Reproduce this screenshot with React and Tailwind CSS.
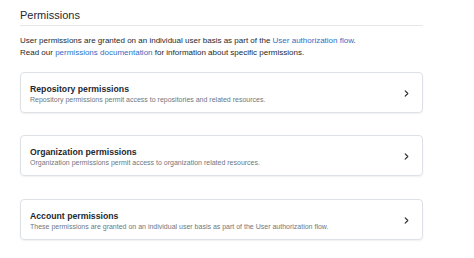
const sections = [
  {
    title: "Repository permissions",
    text: "Repository permissions permit access to repositories and related resources.",
  },
  {
    title: "Organization permissions",
    text: "Organization permissions permit access to organization related resources.",
  },
  {
    title: "Account permissions",
    text: "These permissions are granted on an individual user basis as part of the User authorization flow.",
  },
];

function Chevron() {
  return (
    <svg viewBox="0 0 8 8" className="w-[7px] h-[7px] text-[#24292f]" fill="none" stroke="currentColor" strokeWidth="1.3" strokeLinecap="round" strokeLinejoin="round" aria-hidden="true">
      <polyline points="2.5,1 5.5,4 2.5,7" />
    </svg>
  );
}

export default function App() {
  return (
    <div className="w-[474px] h-[258px] bg-white font-['Liberation_Sans',Arial,sans-serif] text-[#24292f]">
      <div className="w-[403px] ml-[20px] pt-[7px]">
        {/* Header */}
        <div className="border-b border-[#e4e7ea] pb-[2px]">
          <h2 className="text-[11px] leading-[16px] font-normal">Permissions</h2>
        </div>

        <p className="mt-[9px] text-[8px] leading-[12px]">
          User permissions are granted on an individual user basis as part of the{" "}
          <a href="#" className="text-[#2f6fc7]">User authorization flow</a>.
          <br />
          Read our <a href="#" className="text-[#2f6fc7]">permissions documentation</a> for information about specific permissions.
        </p>

        {/* Permission sections */}
        <div className="mt-[12.5px] flex flex-col gap-[22.5px]">
          {sections.map((s) => (
            <button
              key={s.title}
              type="button"
              className="flex items-center justify-between text-left border border-[#dde1e5] rounded-[4px] shadow-[0_1px_2px_rgba(0,0,0,0.06)] pl-[9px] pr-[12px] pt-[10px] pb-[8px]"
            >
              <div>
                <div className="text-[8.7px] leading-[12px] font-bold">{s.title}</div>
                <div className="text-[7px] leading-[9px] text-[#6e7781]">{s.text}</div>
              </div>
              <Chevron />
            </button>
          ))}
        </div>
      </div>
    </div>
  );
}
